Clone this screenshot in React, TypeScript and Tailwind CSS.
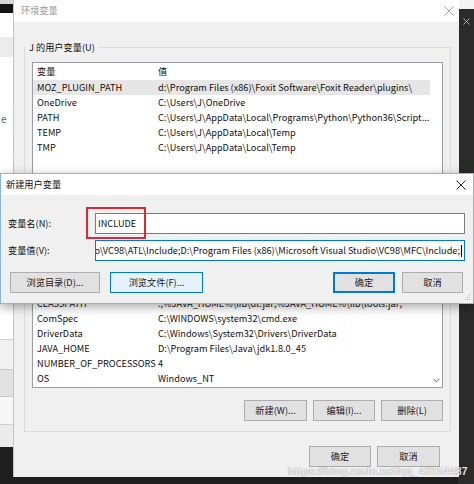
import React from "react";

const userVars = [
  ["MOZ_PLUGIN_PATH", "d:\\Program Files (x86)\\Foxit Software\\Foxit Reader\\plugins\\"],
  ["OneDrive", "C:\\Users\\J\\OneDrive"],
  ["PATH", "C:\\Users\\J\\AppData\\Local\\Programs\\Python\\Python36\\Script..."],
  ["TEMP", "C:\\Users\\J\\AppData\\Local\\Temp"],
  ["TMP", "C:\\Users\\J\\AppData\\Local\\Temp"],
];

const sysVars = [
  ["ALLUSERSPROFILE", "C:\\ProgramData"],
  ["CATALINA_HOME", "D:\\apache-tomcat-8.5.16"],
  ["CLASSPATH", ".;%JAVA_HOME%\\lib\\dt.jar;%JAVA_HOME%\\lib\\tools.jar;"],
  ["ComSpec", "C:\\WINDOWS\\system32\\cmd.exe"],
  ["DriverData", "C:\\Windows\\System32\\Drivers\\DriverData"],
  ["JAVA_HOME", "D:\\Program Files\\Java\\jdk1.8.0_45"],
  ["NUMBER_OF_PROCESSORS", "4"],
  ["OS", "Windows_NT"],
];

function CloseIcon({ color = "#333" }: { color?: string }) {
  return (
    <svg width="10" height="10" viewBox="0 0 10 10">
      <path d="M0.5 0.5 L9.5 9.5 M9.5 0.5 L0.5 9.5" stroke={color} strokeWidth="1" />
    </svg>
  );
}

function Btn({
  children,
  w,
  variant = "normal",
}: {
  children: React.ReactNode;
  w: string;
  variant?: "normal" | "hover" | "default";
}) {
  const look =
    variant === "hover"
      ? "border border-[#0078d7] bg-[#e5f1fb]"
      : variant === "default"
        ? "border-2 border-[#0078d7] bg-[#e1e1e1]"
        : "border border-[#adadad] bg-[#e1e1e1]";
  return (
    <div className={`flex h-[21px] items-center justify-center ${w} ${look} text-[#1a1a1a]`}>
      {children}
    </div>
  );
}

function VarList({
  rows,
  height,
  selected,
  arrow,
  headerH = "h-[17px]",
}: {
  rows: string[][];
  height: string;
  selected?: number;
  arrow?: boolean;
  headerH?: string;
}) {
  return (
    <div className={`flex ${height} overflow-hidden border border-[#9a9ea6] bg-white`}>
      <div className="min-w-0 flex-1">
        <div className={`flex ${headerH} items-center pl-[4px]`}>
          <span className="w-[121px]">变量</span>
          <span>值</span>
        </div>
        {rows.map((r, i) => (
          <div
            key={r[0]}
            className={`flex h-[15px] items-center whitespace-nowrap pl-[4px] ${i === selected ? "bg-[#e6e6e6]" : ""}`}
          >
            <span className="w-[121px] shrink-0">{r[0]}</span>
            <span>{r[1]}</span>
          </div>
        ))}
      </div>
      <div className="flex w-[12px] flex-col items-center justify-end pb-[4px]">
        {arrow && (
          <svg width="7" height="5" viewBox="0 0 7 5">
            <path d="M0.5 0.8 L3.5 3.8 L6.5 0.8" stroke="#606060" fill="none" strokeWidth="1" />
          </svg>
        )}
      </div>
    </div>
  );
}

function Group({ label, className, children }: { label: string; className: string; children: React.ReactNode }) {
  return (
    <div className={`relative border border-[#dcdcdc] ${className}`}>
      <span className="absolute -top-[5px] left-[1px] bg-[#f0f0f0] px-[3px]">{label}</span>
      {children}
    </div>
  );
}

export default function App() {
  const value =
    "C:\\Program Files (x86)\\Microsoft Visual Studio\\VC98\\ATL\\Include;D:\\Program Files (x86)\\Microsoft Visual Studio\\VC98\\MFC\\Include;";
  return (
    <div className="relative h-[484px] w-[474px] overflow-hidden bg-[#1e1e1e] font-['Noto_Sans_CJK_SC','Noto_Sans',sans-serif] text-[9.2px] leading-none text-[#111]">
      {/* window peeking on the left */}
      <div className="absolute left-0 top-0 flex h-[447px] w-[13px] flex-col bg-white">
        <div className="h-[4px] bg-[#d6d6d6]" />
        <div className="h-[9px] bg-[#141414]" />
        <div className="h-[24px]" />
        <div className="h-[20px] bg-[#ececec]" />
        <div className="h-[57px]" />
        <div className="h-[12px] pl-[1px] text-[10px] text-[#2c6fc0]">e</div>
        <div className="h-[213px]" />
        <div className="h-[30px] border-t border-[#d0d0d0] bg-[#f2f2f2]" />
        <div className="h-[28px] border-y border-[#c6c6c6] bg-[#e1e1e1]" />
        <div className="h-[28px] border-b border-[#d0d0d0] bg-[#f7f7f7]" />
        <div className="flex-1 bg-[#ebebeb]" />
      </div>

      {/* dark window on the right */}
      <div className="absolute right-0 top-0 flex h-[484px] w-[16px] flex-col">
        <div className="h-[9px] bg-[#f4f4f4]" />
        <div className="flex flex-1 justify-center bg-[#2b2b2b] pt-[9px]">
          <svg width="7" height="7" viewBox="0 0 7 7">
            <path d="M0.5 0.5 L6.5 6.5 M6.5 0.5 L0.5 6.5" stroke="#b0b0b0" strokeWidth="1" />
          </svg>
        </div>
      </div>

      {/* 环境变量 window */}
      <div className="absolute left-[13px] top-0 flex h-[477px] w-[446px] flex-col border-l border-[#c4c4c4] bg-[#f0f0f0]">
        <div className="flex h-[22px] shrink-0 items-center justify-between bg-white pl-[7px] pr-[5px] text-[#9a9a9a]">
          <span>环境变量</span>
          <CloseIcon color="#a8a8a8" />
        </div>
        <div className="flex flex-1 flex-col pl-[10px] pr-[8px] pt-[25px]">
          <Group label="J 的用户变量(U)" className="h-[176px] px-[7px] pt-[14px]">
            <VarList rows={userVars} height="h-[125px]" selected={0} />
          </Group>
          <Group label="系统变量(S)" className="mt-[9px] px-[7px] pb-[10px] pt-[14px]">
            <VarList rows={sysVars} height="h-[141px]" headerH="h-[18px]" arrow />
            <div className="mt-[12px] flex justify-end gap-[6px]">
              <Btn w="w-[63px]">新建(W)...</Btn>
              <Btn w="w-[62px]">编辑(I)...</Btn>
              <Btn w="w-[62px]">删除(L)</Btn>
            </div>
          </Group>
          <div className="mt-[14px] flex justify-end gap-[6px] pr-[11px]">
            <Btn w="w-[62px]">确定</Btn>
            <Btn w="w-[63px]">取消</Btn>
          </div>
        </div>
      </div>

      {/* watermark */}
      <div className="absolute left-[288px] top-[466px] whitespace-nowrap font-['Liberation_Sans',sans-serif] text-[11px] font-bold text-white/85 [text-shadow:0_0_1px_rgba(0,0,0,0.55)]">
        https://blog.csdn.net/qq_43154487
      </div>

      {/* 新建用户变量 dialog */}
      <div className="absolute left-0 top-[173px] flex h-[131px] w-[474px] flex-col border border-[#86b6e6] bg-[#f0f0f0] shadow-[0_3px_10px_rgba(0,0,0,0.35)]">
        <div className="flex h-[21px] shrink-0 items-center justify-between bg-white pl-[5px] pr-[7px]">
          <span>新建用户变量</span>
          <CloseIcon color="#222" />
        </div>
        <div className="flex flex-col pl-[7px] pr-[8px] pt-[18px]">
          <div className="flex h-[21px] items-center">
            <span className="w-[87px] shrink-0">变量名(N):</span>
            <div className="flex h-full flex-1 items-center border border-[#7a7a7a] bg-white pl-[2px]">INCLUDE</div>
          </div>
          <div className="mt-[6px] flex h-[21px] items-center">
            <span className="w-[87px] shrink-0">变量值(V):</span>
            <div className="flex h-full min-w-0 flex-1 items-center justify-end overflow-hidden whitespace-nowrap border border-[#0078d7] bg-white pr-[2px]">
              <span className="shrink-0">{value}</span>
              <span className="ml-[1px] h-[12px] w-[1px] shrink-0 bg-black" />
            </div>
          </div>
          <div className="mx-[2px] mt-[11px] flex items-center">
            <Btn w="w-[90px]">浏览目录(D)...</Btn>
            <div className="ml-[10px]">
              <Btn w="w-[93px]" variant="hover">浏览文件(F)...</Btn>
            </div>
            <div className="ml-auto">
              <Btn w="w-[62px]" variant="default">确定</Btn>
            </div>
            <div className="ml-[7px]">
              <Btn w="w-[61px]">取消</Btn>
            </div>
          </div>
        </div>
        {/* red highlight around the name field */}
        <div className="absolute left-[85px] top-[33px] h-[32px] w-[60px] border-2 border-[#e0282e]" />
        {/* size grip */}
        <svg className="absolute bottom-[2px] right-[2px]" width="6" height="6" viewBox="0 0 6 6">
          <rect x="4" y="0" width="1" height="1" fill="#b8b8b8" />
          <rect x="2" y="2" width="1" height="1" fill="#b8b8b8" />
          <rect x="4" y="2" width="1" height="1" fill="#b8b8b8" />
          <rect x="0" y="4" width="1" height="1" fill="#b8b8b8" />
          <rect x="2" y="4" width="1" height="1" fill="#b8b8b8" />
          <rect x="4" y="4" width="1" height="1" fill="#b8b8b8" />
        </svg>
      </div>
    </div>
  );
}
